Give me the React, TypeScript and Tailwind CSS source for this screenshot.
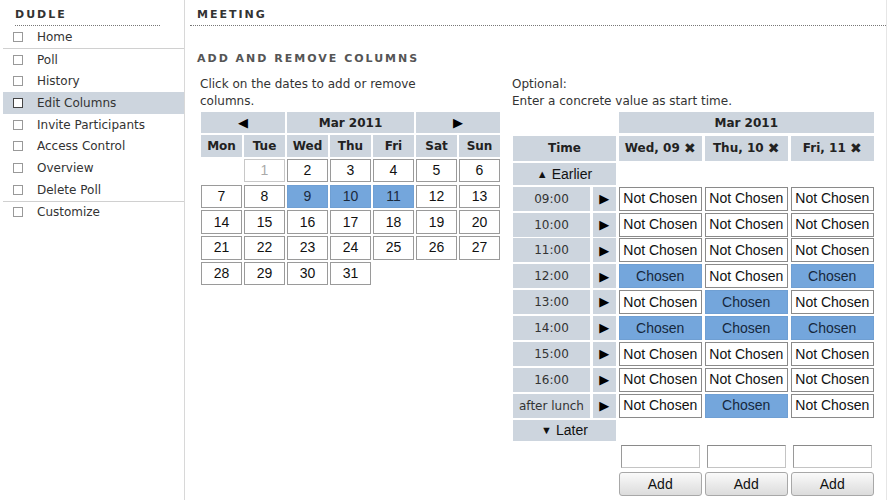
import React from 'react';

// Dudle: edit columns page (date picker + time grid)

const NAV_TOP = ['Home'];
const NAV_MID = ['Poll', 'History', 'Edit Columns', 'Invite Participants', 'Access Control', 'Overview', 'Delete Poll'];
const NAV_BOTTOM = ['Customize'];

const DAY_NAMES = ['Mon', 'Tue', 'Wed', 'Thu', 'Fri', 'Sat', 'Sun'];
const SELECTED_DAYS = [9, 10, 11];

const TIMES = ['09:00', '10:00', '11:00', '12:00', '13:00', '14:00', '15:00', '16:00', 'after lunch'];
// which of Wed/Thu/Fri is chosen per row
const CHOSEN: boolean[][] = [
  [false, false, false],
  [false, false, false],
  [false, false, false],
  [true, false, true],
  [false, true, false],
  [true, true, true],
  [false, false, false],
  [false, false, false],
  [false, true, false],
];

const verdana = 'font-["DejaVu_Sans",Verdana,sans-serif]';
const arial = 'font-["Liberation_Sans",Arial,sans-serif]';

function NavItem({ label, active }: { label: string; active?: boolean }) {
  return (
    <div className={['flex items-center h-[21.7px] pl-[10px]', active ? 'bg-[#cdd5de]' : ''].join(' ')}>
      <span className={['w-[10px] h-[10px] border bg-white', active ? 'border-[#444]' : 'border-[#999]'].join(' ')} />
      <span className="ml-[14px] text-[12px] leading-[14px] text-[#333]">{label}</span>
    </div>
  );
}

function Sidebar() {
  return (
    <div className="w-[185px] shrink-0 border-r border-[#d8d8d8] pl-[3px]">
      <div className="mx-[12px] pt-[8px] pb-[3px] border-b border-dotted border-[#777] w-[145px] text-[11px] leading-[14px] font-bold tracking-[2px] text-[#333]">
        DUDLE
      </div>
      <div className="border-b border-[#d0d0d0]">
        {NAV_TOP.map(l => <NavItem key={l} label={l} />)}
      </div>
      <div className="border-b border-[#d0d0d0]">
        {NAV_MID.map(l => <NavItem key={l} label={l} active={l === 'Edit Columns'} />)}
      </div>
      <div>
        {NAV_BOTTOM.map(l => <NavItem key={l} label={l} />)}
      </div>
    </div>
  );
}

function Calendar() {
  const cells: (number | null)[] = [null];
  for (let d = 1; d <= 31; d++) cells.push(d);

  return (
    <div className="grid grid-cols-[repeat(7,41px)] gap-x-[2px] gap-y-[2.3px] ml-[1px] mt-[3px]">
      {/* month header */}
      <div className="col-span-2 h-[21px] bg-[#cdd5de] flex items-center justify-center text-[13px] text-black">◀</div>
      <div className="col-span-3 h-[21px] bg-[#cdd5de] flex items-center justify-center text-[12px] font-bold text-[#222]">Mar 2011</div>
      <div className="col-span-2 h-[21px] bg-[#cdd5de] flex items-center justify-center text-[13px] text-black">▶</div>

      {DAY_NAMES.map(d => (
        <div key={d} className="h-[21.5px] bg-[#cdd5de] flex items-center justify-center text-[12px] font-bold text-[#222]">
          {d}
        </div>
      ))}

      {cells.map((d, i) => {
        if (d === null) return <div key={`e${i}`} />;
        const selected = SELECTED_DAYS.includes(d);
        const past = d === 1;
        return (
          <div
            key={d}
            className={[
              arial,
              'h-[23.4px] border flex items-center justify-center text-[14px]',
              selected
                ? 'bg-[#74a6dc] border-[#6f9fd3] text-[#1b2a3c]'
                : past
                  ? 'bg-white border-[#c8c8c8] text-[#aaa]'
                  : 'bg-white border-[#9a9a9a] text-[#111]',
            ].join(' ')}
          >
            {d}
          </div>
        );
      })}
    </div>
  );
}

function ChoiceButton({ chosen }: { chosen: boolean }) {
  return (
    <div
      className={[
        arial,
        'h-[24px] border flex items-center justify-center text-[14px]',
        chosen ? 'bg-[#74a6dc] border-[#6f9fd3] text-[#16283d]' : 'bg-white border-[#8a8a8a] text-[#111]',
      ].join(' ')}
    >
      {chosen ? 'Chosen' : 'Not Chosen'}
    </div>
  );
}

function TimeTable() {
  return (
    <div className="grid grid-cols-[77px_23.5px_83.5px_83.5px_83.5px] gap-x-[2.5px] gap-y-[1.9px] ml-[1px] mt-[3px]">
      {/* row: month */}
      <div className="col-span-2" />
      <div className="col-span-3 h-[21px] bg-[#cdd5de] flex items-center justify-center text-[12px] font-bold text-[#222]">Mar 2011</div>

      {/* row: time + days */}
      <div className="col-span-2 h-[25px] mt-[1px] bg-[#cdd5de] flex items-center justify-center text-[12px] font-bold text-[#222]">Time</div>
      {['Wed, 09', 'Thu, 10', 'Fri, 11'].map(d => (
        <div key={d} className="h-[25px] mt-[1px] bg-[#cdd5de] flex items-center justify-center text-[12px] font-bold text-[#222]">
          {d}&nbsp;<span className="text-[14px]">✖</span>
        </div>
      ))}

      {/* row: earlier */}
      <div className={[arial, 'col-span-2 h-[21.5px] mt-[0.5px] bg-[#cdd5de] flex items-center justify-center text-[14px] text-[#111]'].join(' ')}>
        <span className="text-[11px] mr-[4px]">▲</span>Earlier
      </div>
      <div className="col-span-3" />

      {TIMES.map((t, r) => (
        <React.Fragment key={t}>
          <div className="h-[24px] bg-[#cdd5de] flex items-center justify-center text-[12px] text-[#333]">{t}</div>
          <div className="h-[24px] bg-[#cdd5de] flex items-center justify-center text-[13px] text-black">▶</div>
          {CHOSEN[r].map((c, k) => <ChoiceButton key={k} chosen={c} />)}
        </React.Fragment>
      ))}

      {/* row: later */}
      <div className={[arial, 'col-span-2 h-[21px] mt-[0.5px] bg-[#cdd5de] flex items-center justify-center text-[14px] text-[#111]'].join(' ')}>
        <span className="text-[11px] mr-[4px]">▼</span>Later
      </div>
      <div className="col-span-3" />

      {/* row: inputs */}
      <div className="col-span-2" />
      {[0, 1, 2].map(i => (
        <input
          key={i}
          className="mx-[2px] mt-[2px] h-[22.5px] bg-white border border-[#c4c4c4] border-t-[#8a8a8a] border-l-[#9a9a9a] outline-none"
        />
      ))}

      {/* row: add buttons */}
      <div className="col-span-2" />
      {[0, 1, 2].map(i => (
        <button
          key={i}
          className={[arial, 'mt-[3px] h-[23.5px] rounded-[3px] border border-[#a8a8a8] bg-gradient-to-b from-[#fafafa] to-[#dcdcdc] text-[14px] text-[#111]'].join(' ')}
        >
          Add
        </button>
      ))}
    </div>
  );
}

export default function App() {
  return (
    <div className={[verdana, 'w-[888px] h-[500px] overflow-hidden bg-white flex text-[#333]'].join(' ')}>
      <Sidebar />

      <div className="w-[702px] shrink-0 border-r border-[#e6e6e6]">
        <div className="ml-[5px] pl-[7px] pt-[8px] pb-[3px] border-b border-dotted border-[#777] text-[11px] leading-[14px] font-bold tracking-[2px] text-[#333]">
          MEETING
        </div>

        <div className="pl-[12px] pt-[26px]">
          <div className="text-[11px] leading-[14px] font-bold tracking-[2px] text-[#555]">ADD AND REMOVE COLUMNS</div>

          <div className="flex mt-[10px]">
            {/* left: calendar */}
            <div className="w-[315px] shrink-0 pl-[3px]">
              <p className="text-[12px] leading-[16.5px] text-[#333] max-w-[240px]">
                Click on the dates to add or remove columns.
              </p>
              <Calendar />
            </div>

            {/* right: times */}
            <div>
              <p className="text-[12px] leading-[16.5px] text-[#333]">
                Optional:<br />
                Enter a concrete value as start time.
              </p>
              <TimeTable />
            </div>
          </div>
        </div>
      </div>
    </div>
  );
}
